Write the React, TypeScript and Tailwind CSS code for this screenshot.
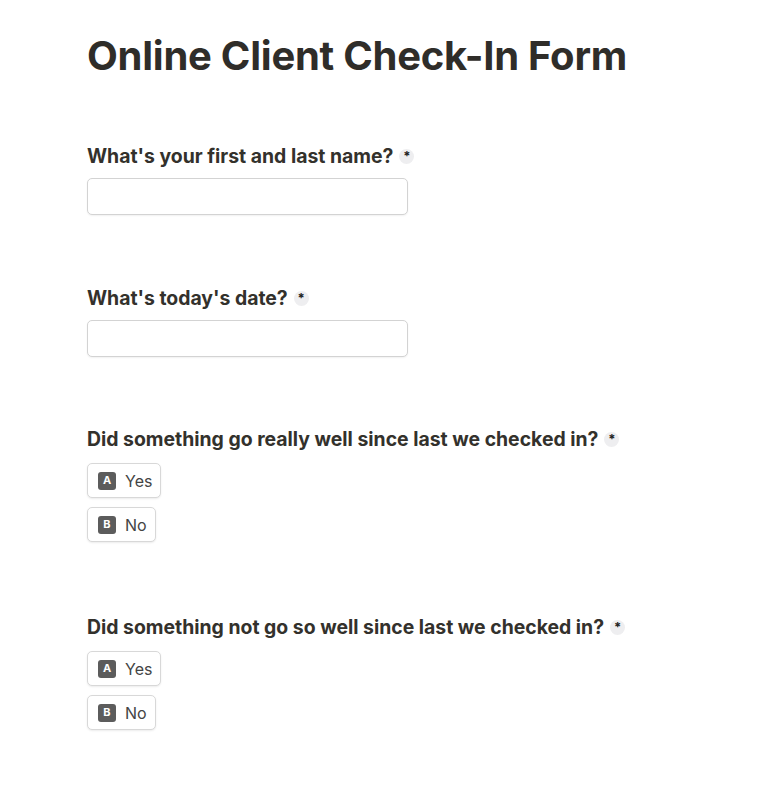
import React from 'react';

const font = { fontFamily: '"Inter", "Liberation Sans", sans-serif' };

function Required() {
  return (
    <span className="ml-1.5 inline-flex h-[15px] w-[15px] items-center justify-center rounded-full bg-[#eeeef0] align-middle text-[13px] font-bold leading-none text-[#222]">
      *
    </span>
  );
}

function Label({ children }: { children: React.ReactNode }) {
  return (
    <div className="flex items-center text-[19.4px] font-bold leading-[24px] text-[#33312c]">
      {children}
      <Required />
    </div>
  );
}

function TextField({ label }: { label: string }) {
  return (
    <div className="flex flex-col gap-[10px]">
      <Label>{label}</Label>
      <input className="h-[37px] w-[321px] rounded-[5px] border border-[#d3d3d3] bg-white px-3 shadow-[0_1px_2px_rgba(0,0,0,0.06)] outline-none" />
    </div>
  );
}

function Choice({ letter, text }: { letter: string; text: string }) {
  return (
    <button className="flex h-[35px] w-fit items-center gap-[9px] rounded-[5px] border border-[#d8d8d8] bg-white pl-[10px] pr-[8px] shadow-[0_1px_2px_rgba(0,0,0,0.08)]">
      <span className="flex h-[18px] w-[18px] items-center justify-center rounded-[3px] bg-[#5c5c5c] text-[11px] font-bold text-white">
        {letter}
      </span>
      <span className="text-[16px] text-[#444]">{text}</span>
    </button>
  );
}

function ChoiceField({ label }: { label: string }) {
  return (
    <div className="flex flex-col">
      <Label>{label}</Label>
      <div className="mt-[12px] flex flex-col gap-[9px]">
        <Choice letter="A" text="Yes" />
        <Choice letter="B" text="No" />
      </div>
    </div>
  );
}

export default function App() {
  return (
    <div className="min-h-[806px] bg-white" style={font}>
      <div className="px-[87px] pt-[30px]">
        <h1 className="text-[40px] font-bold leading-[52px] tracking-[-0.25px] text-[#2f2d29]">
          Online Client Check-In Form
        </h1>
        <div className="mt-[62px] flex flex-col">
          <TextField label="What's your first and last name?" />
          <div className="mt-[71px]">
            <TextField label="What's today's date?" />
          </div>
          <div className="mt-[70px]">
            <ChoiceField label="Did something go really well since last we checked in?" />
          </div>
          <div className="mt-[73px]">
            <ChoiceField label="Did something not go so well since last we checked in?" />
          </div>
        </div>
      </div>
    </div>
  );
}
